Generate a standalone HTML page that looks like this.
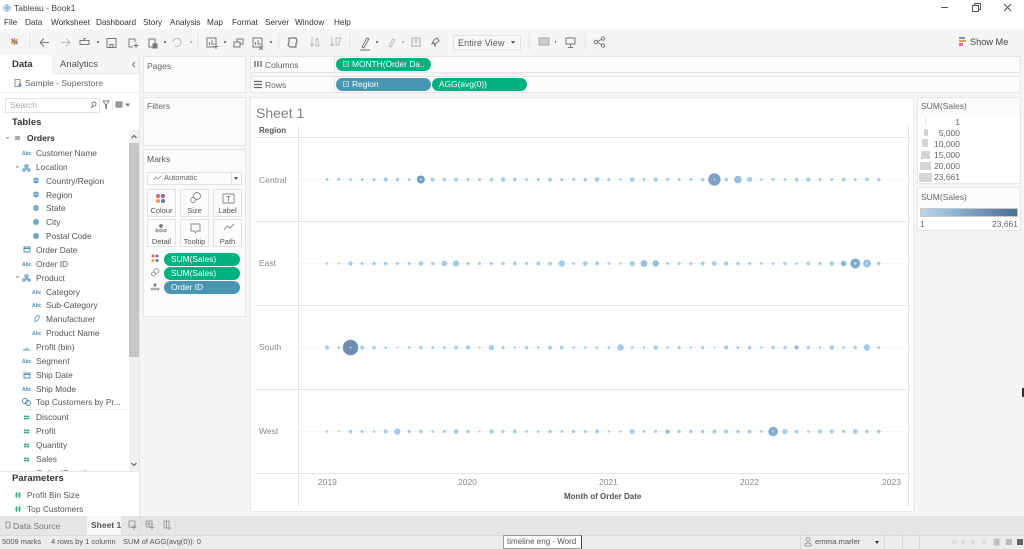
<!DOCTYPE html>
<html><head><meta charset="utf-8"><title>Tableau - Book1</title>
<style>
*{box-sizing:border-box}
html,body{margin:0;padding:0;background:#f5f5f5}
body{width:1024px;height:549px;overflow:hidden}
#w{position:absolute;left:0;top:0;width:1024px;height:549px;overflow:hidden;background:#f5f5f5;font-family:"Liberation Sans",sans-serif;font-size:8.5px;color:#555;filter:blur(.3px)}
.t{position:absolute;white-space:nowrap;line-height:12px}
.b{position:absolute}
.p{position:absolute;background:#fbfbfb;border:1px solid #e6e6e6}
.pill{position:absolute;height:13px;border-radius:7px;color:#fff;line-height:13px;font-size:8.4px;white-space:nowrap}
.g{background:#00b180}.bl{background:#4996b2}
.card{position:absolute;width:29px;height:28px;border:1px solid #e3e3e3;background:#fbfbfb;text-align:center;font-size:7.5px;color:#555;padding-top:16px;line-height:10px}
svg{position:absolute;overflow:visible}
.m{color:#333;font-size:8.2px}
.f{color:#555;font-size:8.4px}
</style></head><body><div id="w">

<div class="b" style="left:0;top:0;width:1024px;height:29px;background:#fff"></div>
<svg style="left:2px;top:3px" width="10" height="10" viewBox="0 0 10 10"><circle cx="5" cy="5" r="4" fill="#c4dcee"/><path d="M5 1v8M1 5h8" stroke="#7ea9cc" stroke-width=".8"/></svg>
<div class="t" style="left:14px;top:2px;color:#444;font-size:8.5px">Tableau - Book1</div>
<div class="t m" style="left:4px;top:17px">File</div>
<div class="t m" style="left:25px;top:17px">Data</div>
<div class="t m" style="left:51px;top:17px">Worksheet</div>
<div class="t m" style="left:96px;top:17px">Dashboard</div>
<div class="t m" style="left:143px;top:17px">Story</div>
<div class="t m" style="left:170px;top:17px">Analysis</div>
<div class="t m" style="left:207px;top:17px">Map</div>
<div class="t m" style="left:232px;top:17px">Format</div>
<div class="t m" style="left:265px;top:17px">Server</div>
<div class="t m" style="left:295px;top:17px">Window</div>
<div class="t m" style="left:334px;top:17px">Help</div>
<svg style="left:940px;top:3px" width="80" height="10" viewBox="0 0 80 10" fill="none" stroke="#555" stroke-width="1"><path d="M1 4.500h7"/><path d="M32.500 2.500h6v6h-6zM34.500 2.500v-2h6v6h-2"/><path d="M64 1l7 7M71 1l-7 7"/></svg>

<!-- toolbar -->
<div class="b" style="left:0;top:29px;width:1024px;height:26px;background:#f5f5f5"></div>
<svg style="left:0;top:29px" width="700" height="26" viewBox="0 0 700 26" fill="none" stroke="#777" stroke-width="1">
<g stroke-width="1.300"><path d="M14.500 9v7M11 12.500h7" stroke="#e8734a"/><path d="M11.500 10l6 5" stroke="#4f7fb5"/><path d="M17.500 10l-6 5" stroke="#e6a23c"/></g>
<path d="M30 4v17M198 4v17M279 4v17M350 4v17" stroke="#e2e2e2"/>
<path d="M40 13.500h9M40 13.500l4-4M40 13.500l4 4"/>
<path d="M61 13.500h9M70 13.500l-4-4M70 13.500l-4 4" stroke="#bbb"/>
<path d="M80 11.500h9v4h-9zM84 11.500v-2h2"/>
<path d="M97 13h2" stroke-width="2"/>
<path d="M107 9.500h9v9h-9zM110 18.500v-3h3v3"/>
<path d="M129 10h6v3M129 10v8h4M136 14v5M133.500 16.500h5" />
<path d="M149 10h6v8h-6z"/><path d="M153 15h4v4h-4z" fill="#777"/>
<path d="M164 13h2" stroke-width="2"/>
<path d="M173 13a4 4 0 1 1 1.500 3.500" stroke="#bbb"/>
<path d="M190 13h2" stroke-width="2" stroke="#bbb"/>
<path d="M207 9h9v9h-9zM209.500 16v-3M212 16v-5M214 16v-2M216 15v5M213.500 17.500h5"/>
<path d="M224 13h2" stroke-width="2"/>
<path d="M234 13h6v5h-6zM237 13v-3h6v5h-3" />
<path d="M253 9h9v9h-9zM255.500 16v-3M258 16v-5M260 16v-2M259 17l4 4M263 17l-4 4"/>
<path d="M270 13h2" stroke-width="2"/>
<path d="M289 9h7l1 3 -1 3v3h-6l-2-2 1-3z" stroke-width="1.200"/>
<path d="M312 8v9M310 15l2 2 2-2M316 10h2l1 7h-3z" stroke="#bbb"/>
<path d="M332 8v9M330 15l2 2 2-2M336 9h5l-2 4v3h-3z" stroke="#bbb"/>
<path d="M362 18l5-9 2 1-5 9zM360 21h10"/>
<path d="M376 13h2" stroke-width="2"/>
<path d="M389 17l4-7 2 1-4 7z" stroke="#bbb"/>
<path d="M402 13h2" stroke-width="2" stroke="#bbb"/>
<path d="M412 9h8v8h-8zM414.500 11h3M416 11v4" stroke="#aaa"/>
<path d="M434 11l3-2 2 3-3 2-1 3-1-3-2 1z"/>
<path d="M529 4v17M585 4v17" stroke="#e2e2e2"/>
<path d="M539 9h10v7h-10z" fill="#ccc" stroke="#aaa"/><path d="M555 13h1" stroke-width="2"/>
<path d="M566 9h9v6h-9zM570.500 15v3M568 18.500h5"/>
<path d="M597 13l5-3M597 13l5 3"/><circle cx="596" cy="13" r="1.700"/><circle cx="603" cy="9.500" r="1.700"/><circle cx="603" cy="16.500" r="1.700"/>
</svg>
<div class="b" style="left:453px;top:35px;width:68px;height:15px;border:1px solid #e2e2e2;background:#f8f8f8"></div>
<div class="t" style="left:458px;top:37px;font-size:9px;letter-spacing:.1px;color:#555">Entire View</div>
<div class="b" style="left:511px;top:41px;border:2px solid transparent;border-top:3px solid #555"></div>
<div class="b" style="left:959px;top:37px;width:6px;height:2px;background:#7d8fc0"></div>
<div class="b" style="left:959px;top:40px;width:7px;height:2px;background:#e8a04c"></div>
<div class="b" style="left:959px;top:43px;width:4px;height:3px;background:#e66a8a"></div>
<div class="t" style="left:970px;top:36px;font-size:9.2px;color:#444">Show Me</div>

<!-- Data pane -->
<div class="b" style="left:0;top:55px;width:139px;height:461px;background:#fff"></div>
<div class="b" style="left:52px;top:55px;width:87px;height:19px;background:#f5f5f5;border-bottom:1px solid #e6e6e6"></div>
<div class="b" style="left:0;top:92px;width:139px;height:1px;background:#efefef"></div>
<div class="t" style="left:12px;top:59px;font-size:9.500px;font-weight:bold;color:#333">Data</div>
<div class="t" style="left:60px;top:59px;font-size:9.500px;color:#555">Analytics</div>
<svg style="left:131px;top:61px" width="6" height="7" fill="none" stroke="#777"><path d="M4 1L1.500 3.500 4 6"/></svg>
<svg style="left:14px;top:78px" width="9" height="10" fill="none" stroke="#777" stroke-width=".8"><path d="M1 1.500h5v7H1z"/><circle cx="6" cy="7" r="1.500" fill="#4f8fc0" stroke="none"/></svg>
<div class="t" style="left:25px;top:77px;color:#666;font-size:8.500px">Sample - Superstore</div>
<div class="b" style="left:5px;top:98px;width:95px;height:15px;border:1px solid #e3e3e3;background:#fff"></div>
<div class="t" style="left:10px;top:99px;color:#aaa;font-size:8.500px">Search</div>
<svg style="left:90px;top:100px" width="50" height="11" fill="none" stroke="#777" stroke-width=".9"><circle cx="4" cy="4" r="2"/><path d="M3 6l-2 2"/><path d="M13 1h6l-2.500 3.500v4l-1-1v-3z"/><path d="M23 0v10" stroke="#ddd"/><path d="M26 2h6v5h-6zM28 2v5M30 2v5" fill="#bbb"/><path d="M36 4l2 2 0 0 1-2z" fill="#777"/></svg>
<div class="t" style="left:12px;top:117px;font-size:9.500px;font-weight:bold;color:#333">Tables</div>
<div class="t" style="left:27px;top:132px;font-size:8.500px;font-weight:bold;color:#333">Orders</div>
<svg style="left:5px;top:134px" width="16" height="8" fill="none" stroke="#888"><path d="M1 3l1.500 1.500L4 3" stroke-width=".8"/><path d="M10 2h5v4h-5z" fill="#aaa" stroke="none"/></svg>

<div class="t f" style="left:36px;top:147px">Customer Name</div>
<div class="t f" style="left:36px;top:161px">Location</div>
<div class="t f" style="left:46px;top:175px">Country/Region</div>
<div class="t f" style="left:46px;top:189px">Region</div>
<div class="t f" style="left:46px;top:202px">State</div>
<div class="t f" style="left:46px;top:216px">City</div>
<div class="t f" style="left:46px;top:230px">Postal Code</div>
<div class="t f" style="left:36px;top:244px">Order Date</div>
<div class="t f" style="left:36px;top:258px">Order ID</div>
<div class="t f" style="left:36px;top:272px">Product</div>
<div class="t f" style="left:46px;top:286px">Category</div>
<div class="t f" style="left:46px;top:299px">Sub-Category</div>
<div class="t f" style="left:46px;top:313px">Manufacturer</div>
<div class="t f" style="left:46px;top:327px">Product Name</div>
<div class="t f" style="left:36px;top:341px">Profit (bin)</div>
<div class="t f" style="left:36px;top:355px">Segment</div>
<div class="t f" style="left:36px;top:369px">Ship Date</div>
<div class="t f" style="left:36px;top:383px">Ship Mode</div>
<div class="t f" style="left:36px;top:396px">Top Customers by Pr...</div>
<div class="b" style="left:20px;top:409px;width:108px;height:1px;background:#eee"></div>
<div class="t f" style="left:36px;top:411px">Discount</div>
<div class="t f" style="left:36px;top:425px">Profit</div>
<div class="t f" style="left:36px;top:439px">Quantity</div>
<div class="t f" style="left:36px;top:453px">Sales</div>
<div class="t f" style="left:36px;top:467px;height:5px;overflow:hidden">Order (Count)</div>

<svg style="left:0;top:140px" width="46" height="340" viewBox="0 140 46 340" font-family="Liberation Sans" fill="none">
<g fill="#4a8db5" font-size="5" font-weight="bold"><text x="22" y="155">Abc</text><text x="22" y="266">Abc</text><text x="32" y="294">Abc</text><text x="32" y="307">Abc</text><text x="32" y="335">Abc</text><text x="22" y="363">Abc</text><text x="22" y="391">Abc</text></g>
<g stroke="#888" stroke-width=".8"><path d="M16 166l1.500 1.500 1.500-1.500M16 276l1.500 1.500 1.500-1.500"/></g>
<g stroke="#4a8db5" stroke-width=".9"><path d="M25 165h3v2h-3zM23 169h2v2h-2zM28 169h2v2h-2zM26.500 167v2M24 169h5"/><path d="M25 275h3v2h-3zM23 279h2v2h-2zM28 279h2v2h-2zM26.500 277v2M24 279h5"/></g>
<g fill="#6ba5c8"><circle cx="36" cy="180.500" r="3"/><circle cx="36" cy="194.500" r="3"/><circle cx="36" cy="208" r="3"/><circle cx="36" cy="222" r="3"/><circle cx="36" cy="236" r="3"/></g>
<g stroke="#fff" stroke-width=".6"><path d="M33 180.500h6M33 194.500h6M33 208h6"/></g>
<g stroke="#4a8db5" stroke-width=".9"><path d="M24 247h6v5h-6zM24 248.500h6M24 373h6v5h-6zM24 374.500h6"/>
<path d="M35 318l3-3 2 2-3 4-2-1zM36 321l-2 1" stroke="#6ba5c8"/>
<path d="M23 350h7M24 350v-1M26 350v-3M28 350v-2" stroke="#6ba5c8"/>
<circle cx="25" cy="401" r="2.500"/><circle cx="28" cy="403" r="2.500"/></g>
<g stroke="#3fae90" stroke-width=".9"><path d="M25 415v5M28 415v5M24 416.500h5.500M24 418.500h5.500M25 429v5M28 429v5M24 430.500h5.500M24 432.500h5.500M25 443v5M28 443v5M24 444.500h5.500M24 446.500h5.500M25 457v5M28 457v5M24 458.500h5.500M24 460.500h5.500"/></g>
</svg>

<div class="b" style="left:129px;top:130px;width:10px;height:342px;background:#f0f0f0"></div>
<div class="b" style="left:129px;top:143px;width:10px;height:214px;background:#c6c6c6"></div>
<svg style="left:130px;top:134px" width="8" height="336" fill="none" stroke="#555"><path d="M1.500 4L4 1.500 6.500 4M1.500 329L4 331.500 6.500 329"/></svg>
<div class="b" style="left:0;top:471px;width:139px;height:1px;background:#e6e6e6"></div>
<div class="t" style="left:12px;top:473px;font-size:9.500px;font-weight:bold;color:#333">Parameters</div>
<div class="t f" style="left:27px;top:489px">Profit Bin Size</div>
<div class="t f" style="left:27px;top:503px">Top Customers</div>
<svg style="left:14px;top:491px" width="8" height="24" fill="none" stroke="#3fae90" stroke-width=".9"><path d="M2.500 1v6M5.500 1v6M1 3h6M1 5h6M2.500 15v6M5.500 15v6M1 17h6M1 19h6"/></svg>
<div class="b" style="left:139px;top:55px;width:1px;height:461px;background:#e6e6e6"></div>

<!-- Pages, Filters, Marks -->
<div class="p" style="left:143px;top:56px;width:103px;height:37px"></div>
<div class="t" style="left:147px;top:60px;color:#666;font-size:8.500px">Pages</div>
<div class="p" style="left:143px;top:97px;width:103px;height:49px"></div>
<div class="t" style="left:147px;top:100px;color:#666;font-size:8.500px">Filters</div>
<div class="p" style="left:143px;top:149px;width:103px;height:168px"></div>
<div class="t" style="left:147px;top:153px;color:#555;font-size:8.500px">Marks</div>
<div class="b" style="left:147px;top:172px;width:95px;height:13px;border:1px solid #e3e3e3;background:#fbfbfb"></div>
<div class="b" style="left:231px;top:172px;width:1px;height:13px;background:#e3e3e3"></div>
<div class="t" style="left:164px;top:172px;color:#666;font-size:7.500px">Automatic</div>
<svg style="left:154px;top:175px" width="8" height="6" fill="none" stroke="#999" stroke-width=".8"><path d="M0 5l2-3 2 2 3-3"/></svg>
<div class="b" style="left:234px;top:177px;border:2px solid transparent;border-top:3px solid #555"></div>

<div class="card" style="left:147px;top:189px">Colour</div>
<div class="card" style="left:180px;top:189px">Size</div>
<div class="card" style="left:213px;top:189px">Label</div>
<div class="card" style="left:147px;top:219px;padding-top:17px">Detail</div>
<div class="card" style="left:180px;top:219px;padding-top:17px">Tooltip</div>
<div class="card" style="left:213px;top:219px;padding-top:17px">Path</div>
<svg style="left:147px;top:189px" width="96" height="60" fill="none" stroke="#888" stroke-width=".9">
<circle cx="11" cy="7" r="2" fill="#d9616a" stroke="none"/><circle cx="16" cy="7" r="2" fill="#8a63b0" stroke="none"/><circle cx="11" cy="12" r="2" fill="#e8a04c" stroke="none"/><circle cx="16" cy="12" r="2" fill="#4f7fb5" stroke="none"/>
<circle cx="50" cy="7" r="3.500"/><circle cx="46" cy="11" r="2.500"/>
<path d="M76 5h11v9H76z"/><path d="M79.500 7.500h4M81.500 7.500v5"/>
<circle cx="14" cy="37" r="1.500" fill="#777"/><circle cx="10" cy="41.500" r="1.300"/><circle cx="14" cy="41.500" r="1.300"/><circle cx="18" cy="41.500" r="1.300"/>
<path d="M44 35h9v7h-3l-1.500 2-1.500-2h-3z"/>
<path d="M77 41l3-4 3 2 4-4"/>
</svg>
<svg style="left:150px;top:254px" width="12" height="42" fill="none" stroke="#888" stroke-width=".8">
<circle cx="3" cy="2" r="1.500" fill="#d9616a" stroke="none"/><circle cx="7" cy="2" r="1.500" fill="#8a63b0" stroke="none"/><circle cx="3" cy="6.500" r="1.500" fill="#e8a04c" stroke="none"/><circle cx="7" cy="6.500" r="1.500" fill="#4f7fb5" stroke="none"/>
<circle cx="6.500" cy="17" r="2.500"/><circle cx="3.500" cy="20" r="2"/>
<circle cx="5" cy="31" r="1.200" fill="#777"/><circle cx="2" cy="35" r="1"/><circle cx="5" cy="35" r="1"/><circle cx="8" cy="35" r="1"/>
</svg>
<div class="pill g" style="left:164px;top:253px;width:76px;padding-left:7px">SUM(Sales)</div>
<div class="pill g" style="left:164px;top:267px;width:76px;padding-left:7px">SUM(Sales)</div>
<div class="pill bl" style="left:164px;top:281px;width:76px;padding-left:7px">Order ID</div>

<!-- Shelves -->
<div class="p" style="left:250px;top:56px;width:771px;height:17px"></div>
<div class="p" style="left:250px;top:76px;width:771px;height:17px"></div>
<div class="b" style="left:334px;top:56px;width:1px;height:17px;background:#e6e6e6"></div>
<div class="b" style="left:334px;top:76px;width:1px;height:17px;background:#e6e6e6"></div>
<svg style="left:254px;top:60px" width="10" height="28" fill="none" stroke="#666"><path d="M1 1v6M4 1v6M7 1v6" stroke-width="1.300"/><path d="M0 21.500h8M0 24.500h8M0 27.500h8" stroke-width="1.200"/></svg>
<div class="t" style="left:265px;top:59px;color:#666;font-size:8.500px">Columns</div>
<div class="t" style="left:265px;top:79px;color:#666;font-size:8.500px">Rows</div>
<div class="pill g" style="left:336px;top:58px;width:95px;padding-left:16px">MONTH(Order Da..</div>
<div class="pill bl" style="left:336px;top:78px;width:95px;padding-left:16px">Region</div>
<div class="pill g" style="left:432px;top:78px;width:95px;padding-left:7px">AGG(avg(0))</div>
<svg style="left:343px;top:61px" width="8" height="27" fill="none" stroke="#fff" stroke-opacity=".7" stroke-width=".8"><path d="M.5.500h5v5h-5zM1.500 3h3M.5 20.500h5v5h-5zM1.500 23h3"/></svg>

<!-- Sheet -->
<div class="b" style="left:250px;top:97px;width:664px;height:415px;background:#fff;border:1px solid #eaeaea"></div>
<div class="t" style="left:256px;top:105px;font-size:14px;line-height:16px;color:#808080">Sheet 1</div>
<div class="t" style="left:259px;top:125px;font-size:8px;font-weight:bold;color:#555">Region</div>
<div class="t" style="left:259px;top:174px;font-size:8.500px;color:#888">Central</div>
<div class="t" style="left:259px;top:257px;font-size:8.500px;color:#888">East</div>
<div class="t" style="left:259px;top:341px;font-size:8.500px;color:#888">South</div>
<div class="t" style="left:259px;top:425px;font-size:8.500px;color:#888">West</div>
<div class="t" style="left:318px;top:476px;font-size:8.500px;color:#888">2019</div>
<div class="t" style="left:458px;top:476px;font-size:8.500px;color:#888">2020</div>
<div class="t" style="left:599px;top:476px;font-size:8.500px;color:#888">2021</div>
<div class="t" style="left:740px;top:476px;font-size:8.500px;color:#888">2022</div>
<div class="t" style="left:882px;top:476px;font-size:8.500px;color:#888">2023</div>
<div class="t" style="left:564px;top:491px;font-size:8px;font-weight:bold;color:#555">Month of Order Date</div>

<svg style="left:0;top:0" width="1024" height="549" viewBox="0 0 1024 549">
<g stroke="#e4e4e4" stroke-width="1"><path d="M255 137.500h653M255 221.500h653M255 305.500h653M255 389.500h653M255 473.500h653M298.500 126v380M908.500 126v380"/></g>
<g stroke="#e8e8e8" stroke-width=".7" stroke-dasharray="1 1"><path d="M299 179.500h609M299 263.500h609M299 347.500h609M299 431.500h609"/></g>
<g fill="#a2cdec">
<g transform="translate(0,179.500)">
<circle cx="327" r="1.500"/><circle cx="338.700" r="1.500"/><circle cx="350.500" r="1.500"/><circle cx="362.200" r="1.500"/><circle cx="374" r="1.500"/><circle cx="385.700" r="2.200"/><circle cx="397.400" r="1.700"/><circle cx="409.200" r="1.500"/><circle cx="420.900" r="4" fill="#6d9fca"/><circle cx="432.700" r="2"/><circle cx="444.400" r="1.700"/><circle cx="456.100" r="2"/><circle cx="467.900" r="1.500"/><circle cx="479.600" r="1.500"/><circle cx="491.400" r="1.800"/><circle cx="503.100" r="2.300"/><circle cx="514.800" r="1.800"/><circle cx="526.600" r="1.500"/><circle cx="538.300" r="1.600"/><circle cx="550.100" r="1.900"/><circle cx="561.800" r="1.500"/><circle cx="573.500" r="1.600"/><circle cx="585.300" r="1.800"/><circle cx="597" r="2.400"/><circle cx="608.800" r="1.600"/><circle cx="620.500" r="1.300"/><circle cx="632.200" r="2.300"/><circle cx="644" r="1.600"/><circle cx="655.700" r="2.200"/><circle cx="667.500" r="1.500"/><circle cx="679.200" r="1.500"/><circle cx="690.900" r="1.500"/><circle cx="702.700" r="1.800"/><circle cx="714.400" r="6.200" fill="#7fa3c4"/><circle cx="726.200" r="1.700"/><circle cx="737.900" r="3.800" fill="#97bedc"/><circle cx="749.600" r="2.600"/><circle cx="761.400" r="1.400"/><circle cx="773.100" r="1.600"/><circle cx="784.900" r="1.400"/><circle cx="796.600" r="1.800"/><circle cx="808.300" r="2.200"/><circle cx="820.100" r="1.500"/><circle cx="831.800" r="1.500"/><circle cx="843.600" r="1.900"/><circle cx="855.300" r="1.500"/><circle cx="867" r="1.800"/><circle cx="878.800" r="1.700"/>
<circle cx="420.900" r="1" fill="#d8e8f4"/><circle cx="714.400" r=".6" fill="#e8f0f8"/>
</g>
<g transform="translate(0,263.500)">
<circle cx="327" r="1.200"/><circle cx="338.700" r="1.200"/><circle cx="350.500" r="2.200"/><circle cx="362.200" r="1.500"/><circle cx="374" r="1.700"/><circle cx="385.700" r="1.800"/><circle cx="397.400" r="1.500"/><circle cx="409.200" r="1.500"/><circle cx="420.900" r="2.300"/><circle cx="432.700" r="1.700"/><circle cx="444.400" r="2.900"/><circle cx="456.100" r="3.200"/><circle cx="467.900" r="1.600"/><circle cx="479.600" r="1.500"/><circle cx="491.400" r="1.600"/><circle cx="503.100" r="1.800"/><circle cx="514.800" r="1.900"/><circle cx="526.600" r="1.600"/><circle cx="538.300" r="1.900"/><circle cx="550.100" r="1.900"/><circle cx="561.800" r="3.200"/><circle cx="573.500" r="1.400"/><circle cx="585.300" r="2.400"/><circle cx="597" r="2"/><circle cx="608.800" r="1.400"/><circle cx="620.500" r="1.200"/><circle cx="632.200" r="2.600"/><circle cx="644" r="3.400" fill="#97c0de"/><circle cx="655.700" r="3.200" fill="#97c0de"/><circle cx="667.500" r="1.500"/><circle cx="679.200" r="1.500"/><circle cx="690.900" r="1.500"/><circle cx="702.700" r="2"/><circle cx="714.400" r="2.400"/><circle cx="726.200" r="2.200"/><circle cx="737.900" r="1.700"/><circle cx="749.600" r="1.500"/><circle cx="761.400" r="1.400"/><circle cx="773.100" r="1.400"/><circle cx="784.900" r="1.700"/><circle cx="796.600" r="1.300"/><circle cx="808.300" r="1.800"/><circle cx="820.100" r="1.600"/><circle cx="831.800" r="2.300"/><circle cx="843.600" r="2.800" fill="#8ab8da"/><circle cx="855.300" r="5" fill="#7fa8cc"/><circle cx="867" r="3.900" fill="#97c0de"/><circle cx="878.800" r="1.700"/>
<circle cx="855.300" r="1.200" fill="#dfeaf4"/><circle cx="867" r="1.200" fill="#c2dbee"/>
</g>
<g transform="translate(0,347.500)">
<circle cx="327" r="2.200"/><circle cx="338.700" r="1.400"/><circle cx="350.500" r="7.700" fill="#6e8fb0"/><circle cx="362.200" r="2"/><circle cx="374" r="1.800"/><circle cx="385.700" r="1.300"/><circle cx="397.400" r="1.100"/><circle cx="409.200" r="1.400"/><circle cx="420.900" r="1.700"/><circle cx="432.700" r="1.500"/><circle cx="444.400" r="1.500"/><circle cx="456.100" r="1.800"/><circle cx="467.900" r="2.200"/><circle cx="479.600" r="1.100"/><circle cx="491.400" r="2.700"/><circle cx="503.100" r="1.600"/><circle cx="514.800" r="1.200"/><circle cx="526.600" r="1.800"/><circle cx="538.300" r="1.200"/><circle cx="550.100" r="1.900"/><circle cx="561.800" r="1.900"/><circle cx="573.500" r="1.400"/><circle cx="585.300" r="1.400"/><circle cx="597" r="1.300"/><circle cx="608.800" r="1.300"/><circle cx="620.500" r="3.300"/><circle cx="632.200" r="1.400"/><circle cx="644" r="1.200"/><circle cx="655.700" r="2.300"/><circle cx="667.500" r="1.300"/><circle cx="679.200" r="1.600"/><circle cx="690.900" r="1.200"/><circle cx="702.700" r="1.600"/><circle cx="714.400" r="1.100"/><circle cx="726.200" r="2"/><circle cx="737.900" r="1.500"/><circle cx="749.600" r="1.700"/><circle cx="761.400" r="1.200"/><circle cx="773.100" r="1.700"/><circle cx="784.900" r="1.700"/><circle cx="796.600" r="2" fill="#8ab8da"/><circle cx="808.300" r="1.700"/><circle cx="820.100" r="1.200"/><circle cx="831.800" r="2.300"/><circle cx="843.600" r="1.400"/><circle cx="855.300" r="1.700"/><circle cx="867" r="3.200"/><circle cx="878.800" r="1.500"/>
<circle cx="350.500" r=".8" fill="#e8f0f8"/>
</g>
<g transform="translate(0,431.500)">
<circle cx="327" r="1.200"/><circle cx="338.700" r="1"/><circle cx="350.500" r="1.800"/><circle cx="362.200" r="1.500"/><circle cx="374" r="1.300"/><circle cx="385.700" r="2.100"/><circle cx="397.400" r="3.200"/><circle cx="409.200" r="1.600"/><circle cx="420.900" r="1.700"/><circle cx="432.700" r="1.400"/><circle cx="444.400" r="1.600"/><circle cx="456.100" r="2.300"/><circle cx="467.900" r="1.700"/><circle cx="479.600" r="1.100"/><circle cx="491.400" r="2.200"/><circle cx="503.100" r="1.600"/><circle cx="514.800" r="2"/><circle cx="526.600" r="1.400"/><circle cx="538.300" r="1.300"/><circle cx="550.100" r="1.600"/><circle cx="561.800" r="1.400"/><circle cx="573.500" r="1.600"/><circle cx="585.300" r="1.500"/><circle cx="597" r="2"/><circle cx="608.800" r="1.100"/><circle cx="620.500" r="1.100"/><circle cx="632.200" r="2.500"/><circle cx="644" r="1.400"/><circle cx="655.700" r="1.500"/><circle cx="667.500" r="2.100" fill="#8ab8da"/><circle cx="679.200" r="1.700"/><circle cx="690.900" r="1.700"/><circle cx="702.700" r="1.700"/><circle cx="714.400" r="2.100"/><circle cx="726.200" r="2"/><circle cx="737.900" r="1.700"/><circle cx="749.600" r="1.900"/><circle cx="761.400" r="1.400"/><circle cx="773.100" r="4.800" fill="#85add0"/><circle cx="784.900" r="2.600"/><circle cx="796.600" r="1.800"/><circle cx="808.300" r="1.300"/><circle cx="820.100" r="2"/><circle cx="831.800" r="2"/><circle cx="843.600" r="1.600"/><circle cx="855.300" r="2.400"/><circle cx="867" r="1.700"/><circle cx="878.800" r="1.900"/>
<circle cx="773.100" r="1.100" fill="#b8d4ea"/>
</g>
</g>
</svg>

<!-- Legends -->
<div class="p" style="left:917px;top:97px;width:104px;height:87px"></div>
<div class="t" style="left:921px;top:100px;color:#666;font-size:8.500px">SUM(Sales)</div>
<div class="b" style="left:918px;top:116px;width:102px;height:67px;background:#fff"></div>
<div class="b" style="left:925px;top:118px;width:1px;height:7px;background:#e2e2e2"></div>
<div class="b" style="left:924px;top:129px;width:4px;height:7px;background:#d6d6d6"></div>
<div class="b" style="left:922px;top:139px;width:6px;height:8px;background:#d6d6d6"></div>
<div class="b" style="left:921px;top:151px;width:9px;height:8px;background:#d6d6d6"></div>
<div class="b" style="left:920px;top:162px;width:11px;height:8px;background:#d6d6d6"></div>
<div class="b" style="left:919px;top:173px;width:13px;height:9px;background:#d6d6d6"></div>
<div class="t" style="right:64px;top:116px;font-size:8.500px;color:#666">1</div>
<div class="t" style="right:64px;top:127px;font-size:8.500px;color:#666">5,000</div>
<div class="t" style="right:64px;top:138px;font-size:8.500px;color:#666">10,000</div>
<div class="t" style="right:64px;top:149px;font-size:8.500px;color:#666">15,000</div>
<div class="t" style="right:64px;top:160px;font-size:8.500px;color:#666">20,000</div>
<div class="t" style="right:64px;top:171px;font-size:8.500px;color:#666">23,661</div>

<div class="p" style="left:917px;top:187px;width:104px;height:44px"></div>
<div class="t" style="left:921px;top:191px;color:#666;font-size:8.500px">SUM(Sales)</div>
<div class="b" style="left:918px;top:207px;width:102px;height:23px;background:#fff"></div>
<div class="b" style="left:920px;top:208px;width:98px;height:9px;background:linear-gradient(90deg,#b9d8ec,#7ba4c6 50%,#47709a);border:1px solid #c8c8c8"></div>
<div class="t" style="left:920px;top:218px;font-size:8.500px;color:#666">1</div>
<div class="t" style="right:6px;top:218px;font-size:8.500px;color:#666">23,661</div>

<!-- Bottom tabs -->
<div class="b" style="left:0;top:516px;width:1024px;height:19px;background:#e6e6e6;border-top:1px solid #e0e0e0"></div>
<div class="b" style="left:87px;top:516px;width:35px;height:19px;background:#f7f7f7"></div>
<div class="t" style="left:13px;top:520px;font-size:8.500px;color:#777">Data Source</div>
<svg style="left:5px;top:521px" width="6" height="8" fill="none" stroke="#888" stroke-width=".8"><path d="M1 1h4v6H1z"/></svg>
<div class="t" style="left:91px;top:519px;font-size:8.500px;font-weight:bold;color:#555">Sheet 1</div>
<svg style="left:124px;top:516px" width="54" height="19" fill="none" stroke="#888" stroke-width=".8"><path d="M5 5h6v6H5zM10 9v5M7.500 11.500h5M22 5h6v6h-6zM25 5v6M22 8h6M28 9v5M25.500 11.500h5M40 5h5v7h-5zM42.500 5v7M45 10v4M42.500 12h5"/><path d="M-2.500 0v19M16.500 0v19M34.500 0v19M51.500 0v19" stroke="#dcdcdc"/></svg>

<!-- Status -->
<div class="b" style="left:0;top:535px;width:1024px;height:14px;background:#ececec;border-top:1px solid #dcdcdc"></div>
<div class="t" style="left:2px;top:536px;font-size:7.500px;color:#555">5009 marks</div>
<div class="t" style="left:51px;top:536px;font-size:7.500px;color:#555">4 rows by 1 column</div>
<div class="t" style="left:123px;top:536px;font-size:7.500px;color:#555">SUM of AGG(avg(0)): 0</div>
<div class="b" style="left:503px;top:535px;width:79px;height:14px;background:#fff;border:1px solid #999;border-right:1px solid #444"></div>
<div class="t" style="left:507px;top:536px;font-size:8px;color:#555">timeline eng - Word</div>
<div class="b" style="left:800px;top:535px;width:1px;height:14px;background:#d8d8d8"></div>
<div class="b" style="left:884px;top:535px;width:1px;height:14px;background:#d8d8d8"></div>
<div class="b" style="left:902px;top:535px;width:1px;height:14px;background:#d8d8d8"></div>
<div class="b" style="left:919px;top:535px;width:1px;height:14px;background:#d8d8d8"></div>
<svg style="left:804px;top:537px" width="8" height="10" fill="none" stroke="#888" stroke-width=".8"><circle cx="4" cy="2.500" r="2"/><path d="M1 9V7q3-2 6 0v2z"/></svg>
<div class="t" style="left:815px;top:536px;font-size:7.700px;color:#555">emma.marler</div>
<div class="b" style="left:875px;top:541px;border:2px solid transparent;border-top:3px solid #333"></div>
<svg style="left:950px;top:538px" width="72" height="9" fill="none" stroke="#ccc" stroke-width=".8"><path d="M3 2v4M7 2L4.500 4 7 6M14 2l-2.500 2L14 6zM22 2l2.500 2L22 6zM32 2l2.500 2L32 6M35 2v4"/><path d="M44 1h5v6h-5zM44 3h5M44 5h5M46 1v6M47.500 1v6" stroke="#aaa"/><rect x="56" y="1" width="6" height="6" fill="#bbb" stroke="none"/><rect x="67" y="1" width="6" height="6" fill="#666" stroke="none"/></svg>
<div class="b" style="left:1022px;top:388px;width:2px;height:9px;background:#333"></div>
</div></body></html>
